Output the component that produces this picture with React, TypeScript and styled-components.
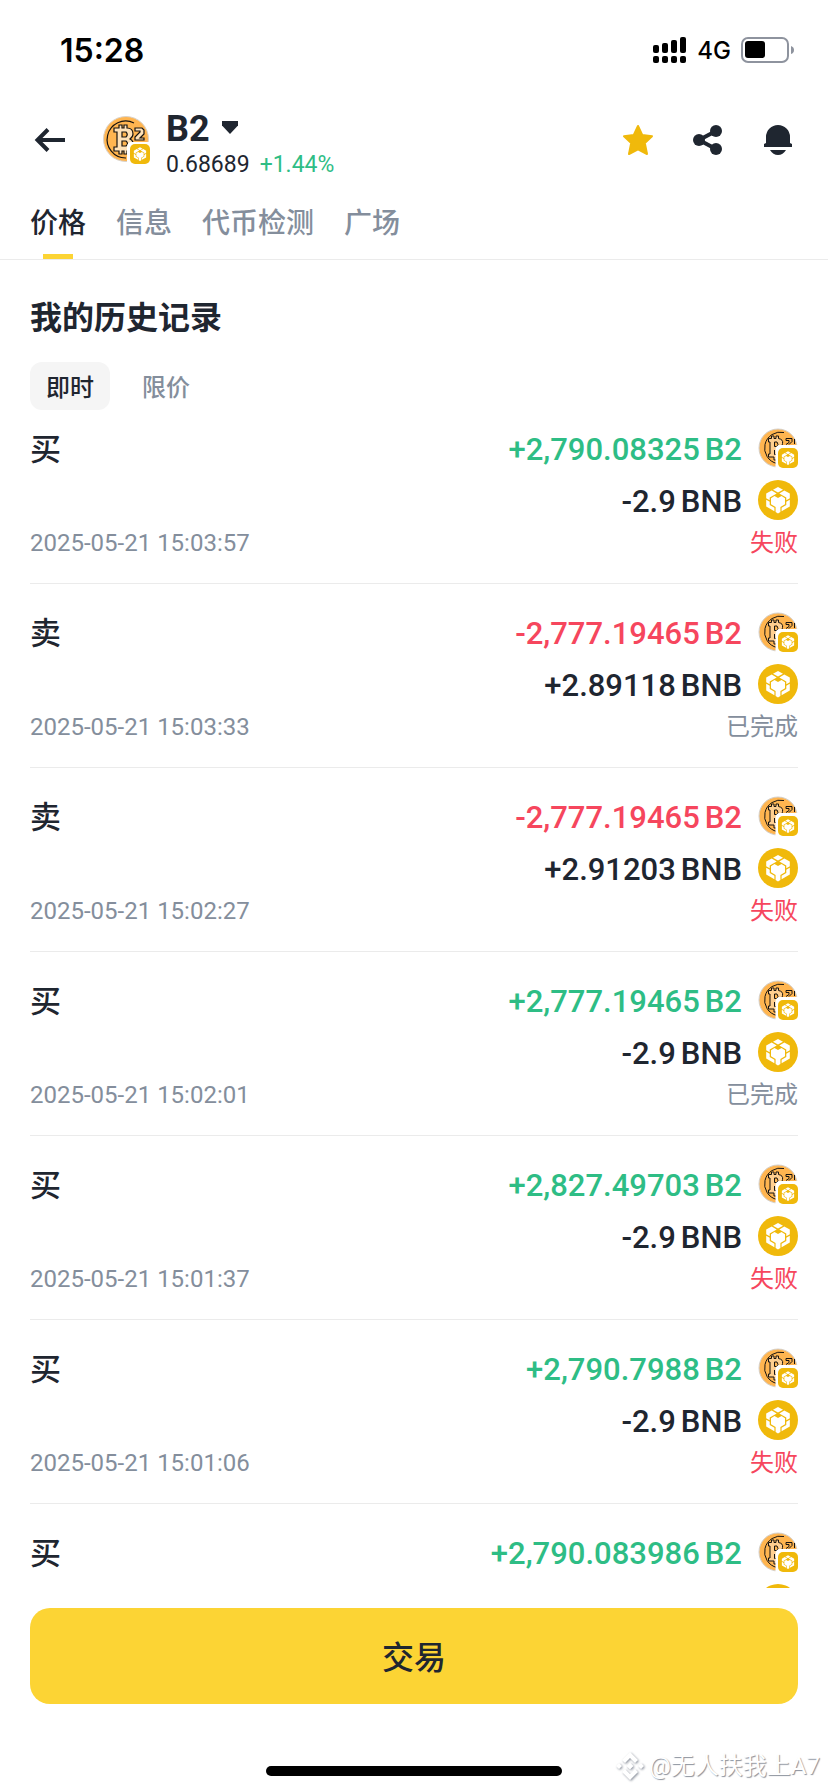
import React from "react";
import styled, { createGlobalStyle, css } from "styled-components";

const color = {
  ink: "#1f2630",
  muted: "#848e9c",
  line: "#ebebeb",
  chip: "#f5f5f5",
  brand: "#fcd434",
  gold: "#f0b90b",
  up: "#2ebd85",
  down: "#f6465d",
};

const GlobalStyle = createGlobalStyle`
  *, *::before, *::after { box-sizing: border-box; }
  body {
    margin: 0;
    background: #fff;
    color: ${color.ink};
    font-family: Roboto, "Noto Sans CJK SC", sans-serif;
  }
  h1, h2, p, ul { margin: 0; padding: 0; }
  ul { list-style: none; }
  button {
    margin: 0;
    padding: 0;
    border: 0;
    background: none;
    color: inherit;
    font: inherit;
    cursor: pointer;
  }
  svg { display: block; flex: none; }
`;

const Screen = styled.div`
  position: relative;
  display: flex;
  flex-direction: column;
  height: 100vh;
  overflow: hidden;
`;

const StatusBar = styled.div`
  display: flex;
  align-items: center;
  justify-content: space-between;
  height: 100px;
  padding: 0 34px 0 60px;
  color: #000;
  font-family: Inter, sans-serif;
`;

const Clock = styled.time`
  font-size: 32px;
  font-weight: 600;
`;

const StatusIcons = styled.div`
  display: flex;
  align-items: center;
  gap: 10px;
  font-size: 24px;
  font-weight: 500;
`;

const Header = styled.header`
  display: flex;
  align-items: center;
  height: 80px;
  padding: 0 30px;
`;

const TokenInfo = styled.div`
  display: flex;
  flex: 1;
  align-items: center;
  gap: 16px;
  padding-left: 32px;
`;

const TokenText = styled.div`
  padding-top: 10px;
`;

const TokenSelect = styled.button`
  display: flex;
  align-items: center;
  gap: 12px;
  font-size: 36px;
  font-weight: 700;
  line-height: 40px;

  svg {
    margin-bottom: 4px;
  }
`;

const PriceLine = styled.p`
  display: flex;
  gap: 10px;
  font-size: 23px;
  line-height: 32px;
`;

const Change = styled.span`
  color: ${color.up};
`;

const Actions = styled.div`
  display: flex;
  gap: 30px;
`;

const Tabs = styled.nav`
  display: flex;
  gap: 30px;
  padding: 24px 30px 0;
  border-bottom: 1px solid ${color.line};
`;

const Tab = styled.button<{ $active?: boolean }>`
  display: flex;
  flex-direction: column;
  align-items: center;
  gap: 10px;
  color: ${(p) => (p.$active ? color.ink : color.muted)};
  font-size: 28px;
  font-weight: 500;
  line-height: 40px;

  &::after {
    content: "";
    width: 30px;
    height: 5px;
    background: ${(p) => (p.$active ? color.brand : "transparent")};
  }
`;

const History = styled.main`
  flex: 1;
  min-height: 0;
  padding: 34px 30px 0;
  overflow: hidden;
`;

const Title = styled.h2`
  font-size: 32px;
  font-weight: 600;
  line-height: 48px;
`;

const Chips = styled.div`
  display: flex;
  gap: 16px;
  padding-top: 20px;
`;

const Chip = styled.button<{ $active?: boolean }>`
  height: 48px;
  padding: 0 16px 2px;
  border-radius: 12px;
  font-size: 24px;
  font-weight: 500;
  color: ${color.muted};
  ${(p) =>
    p.$active &&
    css`
      color: ${color.ink};
      background: ${color.chip};
    `}
`;

const Row = styled.li`
  padding: 28px 0 24px;
  border-bottom: 1px solid ${color.line};

  &:first-child {
    padding-top: 18px;
  }
`;

const RowBody = styled.div`
  display: flex;
  justify-content: space-between;
  font-size: 31px;
  font-weight: 500;
  line-height: 36px;
`;

const Side = styled.span`
  padding-top: 4px;
`;

const Amounts = styled.div`
  display: flex;
  flex-direction: column;
  gap: 12px;
`;

const Amount = styled.div<{ $tone?: "up" | "down" }>`
  display: flex;
  align-items: center;
  justify-content: flex-end;
  gap: 16px;
  height: 40px;
  color: ${(p) => (p.$tone ? color[p.$tone] : color.ink)};
`;

const Figure = styled.span`
  display: flex;
  gap: 5px;
  padding-top: 4px;
`;

const RowMeta = styled.div`
  display: flex;
  justify-content: space-between;
  padding-top: 7px;
  color: ${color.muted};
  font-size: 24px;
  line-height: 32px;
`;

const Status = styled.span<{ $failed: boolean }>`
  color: ${(p) => (p.$failed ? color.down : color.muted)};
`;

const Footer = styled.footer`
  display: flex;
  flex-direction: column;
  align-items: center;
  gap: 62px;
  padding: 20px 30px 16px;
`;

const TradeButton = styled.button`
  width: 100%;
  height: 96px;
  padding-bottom: 2px;
  border-radius: 20px;
  background: ${color.brand};
  font-size: 32px;
  font-weight: 500;
`;

const HomeIndicator = styled.div`
  width: 296px;
  height: 10px;
  border-radius: 5px;
  background: #000;
`;

const Watermark = styled.div`
  position: absolute;
  right: 8px;
  bottom: 10px;
  display: flex;
  align-items: center;
  gap: 4px;
  color: #fff;
  font-size: 24px;
  line-height: 32px;
  text-shadow: 1px 1px 1px #8b919c;

  svg {
    filter: drop-shadow(1px 1px 1px #8b919c);
  }
`;

const Signal = () => (
  <svg width="34" height="26" viewBox="0 0 34 26" aria-label="信号">
    {[8, 6, 3, 0].map((top, i) => (
      <g key={top}>
        <rect x={i * 9} y={top} width="6" height={16 - top} rx="2" />
        <rect x={i * 9} y="19" width="6" height="7" rx="2" />
      </g>
    ))}
  </svg>
);

const Battery = () => (
  <svg width="53" height="26" viewBox="0 0 53 26" aria-label="电量">
    <rect x="1" y="1" width="46" height="24" rx="6" fill="none" stroke="#8e939e" strokeWidth="2" />
    <rect x="4" y="4" width="20" height="17" rx="3" />
    <path d="M50 9q3 1 3 4t-3 4z" fill="#8e939e" />
  </svg>
);

const BackIcon = () => (
  <svg width="40" height="40" viewBox="0 0 40 40" fill="none" stroke={color.ink} strokeWidth="4">
    <path d="M35 20H8M18 9.500L7.500 20 18 30.500" />
  </svg>
);

const Caret = () => (
  <svg width="16" height="13" viewBox="0 0 16 13" fill={color.ink}>
    <path d="M0 0h16v4.500L8 13 0 4.500z" />
  </svg>
);

const StarIcon = () => (
  <svg width="40" height="40" viewBox="0 0 40 40" fill={color.gold} stroke={color.gold} strokeWidth="2" strokeLinejoin="round">
    <path d="M20 6l4.200 9 9.800 1.200-7.200 6.800 2.200 11-9-4.600L11 34l2.200-11L6 16.200l9.800-1.200z" />
  </svg>
);

const ShareIcon = () => (
  <svg width="40" height="40" viewBox="0 0 40 40" fill={color.ink}>
    <path d="M28 11L11 20l17 9" fill="none" stroke={color.ink} strokeWidth="4" />
    <circle cx="28" cy="11" r="6" />
    <circle cx="11" cy="20" r="6" />
    <circle cx="28" cy="29" r="6" />
  </svg>
);

const BellIcon = () => (
  <svg width="40" height="40" viewBox="0 0 40 40" fill={color.ink}>
    <path d="M8 17a12 12 0 0 1 24 0v6l2 1v3H6v-3l2-1z" />
    <path d="M12 30h16q-3 5-8 5t-8-5z" />
  </svg>
);

/* Cube mark, centred on the origin and about 24 units wide. */
const CubeMark = () => (
  <g fill="#fff">
    <path d="M0-13L5-10.200 0-7.400-5-10.200z" />
    <path d="M-6.300-9.500L-1.300-6.600-8.300-2.600V.2L-11.800-1.800V-6.400z" />
    <path d="M6.300-9.500L1.300-6.600 8.300-2.600V.2L11.800-1.800V-6.400z" />
    <path d="M-11.800-.3L-8.300 1.700V5L-3.600 7.800V11.200L-11.800 6.500z" />
    <path d="M11.800-.3L8.300 1.700V5L3.600 7.800V11.200L11.800 6.500z" />
    <path d="M-7-1.800L-3.500-4 0-2 3.500-4 7-1.800V4.200L2.400 7V12L0 13.400-2.400 12V7L-7 4.200z" />
  </g>
);

const BnbIcon = () => (
  <svg width="40" height="40" viewBox="0 0 40 40" aria-label="BNB">
    <circle cx="20" cy="20" r="20" fill={color.gold} />
    <g transform="translate(20 20)">
      <CubeMark />
    </g>
  </svg>
);

const TokenIcon = () => (
  <svg width="48" height="48" viewBox="0 0 48 48" aria-label="B2">
    <circle cx="24" cy="23" r="22.500" fill="#ffb550" stroke="#d9d3cc" strokeWidth="1" />
    <path d="M32 7A18.500 18.500 0 1 0 24 42" fill="none" stroke="#161310" strokeWidth="1.200" />
    <path
      d="M12 12h5V9h3v3h2V9h3v3q6 0 6 6 0 3-3 5 4 2 3 7-1 4-6 5v3h-3v-3h-2v3h-3v-3h-5v-4h3V16h-3z"
      fill="#ffe2b8"
      stroke="#161310"
      strokeWidth="1.200"
    />
    <path d="M20 16h4q2.500 2.500 0 5h-4zM20 25h4q3 2.500 0 5h-4z" fill="#ffb550" stroke="#161310" strokeWidth="1.200" />
    <path
      d="M33 12h7l2 2v4l-4 4h4v2h-9v-3l5-5v-1h-5z"
      fill="#ffe2b8"
      stroke="#161310"
      strokeWidth="1.200"
    />
    <path d="M25 48V31q0-5 5-5h18v22z" fill="#fff" />
    <rect x="28" y="28" width="20" height="20" rx="5" fill={color.gold} />
    <g transform="translate(38 38) scale(.52)">
      <CubeMark />
    </g>
  </svg>
);

const SmallTokenIcon = () => (
  <svg width="40" height="40" viewBox="0 0 40 40" aria-label="B2">
    <circle cx="20" cy="20" r="19" fill="#ffb550" stroke="#d3d0cc" strokeWidth="1" />
    <path d="M26 4.500A15.700 15.700 0 1 0 19 35.500" fill="none" stroke="#161310" strokeWidth="1" />
    <path
      d="M10.500 10.500h3V8H16v2.500h2V8h2.500v2.500q5 1 4 5 0 3-2.500 4 3.500 2 2.500 6-1 3-4 3.500v3H16v-3h-5.500V26H12V14h-1.500z"
      fill="#ffcf90"
      stroke="#161310"
      strokeWidth="1"
    />
    <path d="M16.500 14v4.500H19q2-2 0-4.500zM16.500 22v4.500H19" fill="#ffb550" stroke="#161310" strokeWidth="1" />
    <path d="M28 10.500h6v3l-3 3M28 10.500v2h3v2l-3 2M36.500 11v5" fill="none" stroke="#161310" strokeWidth="1" />
    <path d="M17.500 40V22q0-5 5-5H40v23z" fill="#fff" />
    <rect x="20" y="20" width="20" height="20" rx="5" fill={color.gold} />
    <g transform="translate(30 30) scale(.52)">
      <CubeMark />
    </g>
  </svg>
);

const BinanceMark = () => (
  <svg width="30" height="30" viewBox="0 0 30 30" fill="#fff">
    <path d="M15 1l8 8-3 3-5-5-5 5-3-3zM15 29l8-8-3-3-5 5-5-5-3 3zM15 11.500l3.500 3.500-3.500 3.500-3.500-3.500zM4 12l3 3-3 3-3-3zM26 12l3 3-3 3-3-3z" />
  </svg>
);

interface Trade {
  side: "买" | "卖";
  token: string;
  bnb?: string;
  time?: string;
  failed?: boolean;
}

const trades: Trade[] = [
  { side: "买", token: "+2,790.08325", bnb: "-2.9", time: "2025-05-21 15:03:57", failed: true },
  { side: "卖", token: "-2,777.19465", bnb: "+2.89118", time: "2025-05-21 15:03:33" },
  { side: "卖", token: "-2,777.19465", bnb: "+2.91203", time: "2025-05-21 15:02:27", failed: true },
  { side: "买", token: "+2,777.19465", bnb: "-2.9", time: "2025-05-21 15:02:01" },
  { side: "买", token: "+2,827.49703", bnb: "-2.9", time: "2025-05-21 15:01:37", failed: true },
  { side: "买", token: "+2,790.7988", bnb: "-2.9", time: "2025-05-21 15:01:06", failed: true },
  { side: "买", token: "+2,790.083986" },
];

const TradeRow = ({ trade }: { trade: Trade }) => (
  <Row>
    <RowBody>
      <Side>{trade.side}</Side>
      <Amounts>
        <Amount $tone={trade.side === "买" ? "up" : "down"}>
          <Figure>
            <span>{trade.token}</span>
            <span>B2</span>
          </Figure>
          <SmallTokenIcon />
        </Amount>
        <Amount>
          {trade.bnb && (
            <Figure>
              <span>{trade.bnb}</span>
              <span>BNB</span>
            </Figure>
          )}
          <BnbIcon />
        </Amount>
      </Amounts>
    </RowBody>
    {trade.time && (
      <RowMeta>
        <time>{trade.time}</time>
        <Status $failed={Boolean(trade.failed)}>{trade.failed ? "失败" : "已完成"}</Status>
      </RowMeta>
    )}
  </Row>
);

export default function App() {
  return (
    <>
      <GlobalStyle />
      <Screen>
        <StatusBar>
          <Clock>15:28</Clock>
          <StatusIcons>
            <Signal />
            4G
            <Battery />
          </StatusIcons>
        </StatusBar>
        <Header>
          <button type="button" aria-label="返回">
            <BackIcon />
          </button>
          <TokenInfo>
            <TokenIcon />
            <TokenText>
              <TokenSelect type="button">
                B2
                <Caret />
              </TokenSelect>
              <PriceLine>
                <span>0.68689</span>
                <Change>+1.44%</Change>
              </PriceLine>
            </TokenText>
          </TokenInfo>
          <Actions>
            <button type="button" aria-label="收藏">
              <StarIcon />
            </button>
            <button type="button" aria-label="分享">
              <ShareIcon />
            </button>
            <button type="button" aria-label="提醒">
              <BellIcon />
            </button>
          </Actions>
        </Header>
        <Tabs>
          <Tab type="button" $active>价格</Tab>
          <Tab type="button">信息</Tab>
          <Tab type="button">代币检测</Tab>
          <Tab type="button">广场</Tab>
        </Tabs>
        <History>
          <Title>我的历史记录</Title>
          <Chips>
            <Chip type="button" $active>即时</Chip>
            <Chip type="button">限价</Chip>
          </Chips>
          <ul>
            {trades.map((trade) => (
              <TradeRow key={trade.time ?? "pending"} trade={trade} />
            ))}
          </ul>
        </History>
        <Footer>
          <TradeButton type="button">交易</TradeButton>
          <HomeIndicator />
        </Footer>
        <Watermark>
          <BinanceMark />
          @无人扶我上A7
        </Watermark>
      </Screen>
    </>
  );
}
